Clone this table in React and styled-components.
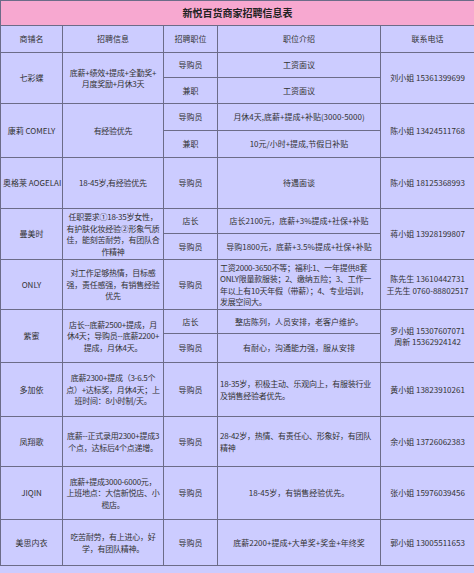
import React from 'react';
import styled, { createGlobalStyle } from 'styled-components';

const GlobalStyle = createGlobalStyle`
  html, body {
    margin: 0;
    padding: 0;
    background: #ccccff;
  }
`;

const Table = styled.table`
  width: 474px;
  border-collapse: collapse;
  table-layout: fixed;
  font-family: "Noto Sans CJK SC", "DejaVu Sans", sans-serif;
  font-size: 8px;
  line-height: 11.5px;
  color: #333;
  background: #ccccff;
  border: 1px solid #6c6c88;
`;

const TitleCell = styled.td`
  height: 24px;
  background: #f7a8d0;
  text-align: center;
  font-weight: bold;
  font-size: 10px;
  color: #222;
  border: 1px solid #6c6c88;
  padding: 0;
`;

const HeadCell = styled.td`
  height: 26px;
  text-align: center;
  border: 1px solid #6c6c88;
  padding: 0 2px;
`;

const Cell = styled.td`
  border: 1px solid #6c6c88;
  text-align: ${(p) => (p.$left ? 'left' : 'center')};
  vertical-align: middle;
  padding: 0 2px;
  white-space: nowrap;
  overflow: hidden;
  letter-spacing: ${(p) => (p.$tight ? '-0.25px' : 'normal')};
`;

const Row = styled.tr`
  height: ${(p) => p.$h}px;
`;

const lines = (arr) =>
  arr.map((t, i) => (
    <React.Fragment key={i}>
      {i > 0 && <br />}
      {t}
    </React.Fragment>
  ));

const data = [
  {
    name: '七彩蝶',
    info: ['底薪+绩效+提成+全勤奖+', '月度奖励+月休3天'],
    contact: ['刘小姐 15361399699'],
    jobs: [
      { pos: '导购员', desc: ['工资面议'], h: 25 },
      { pos: '兼职', desc: ['工资面议'], h: 26 },
    ],
  },
  {
    name: '康莉 COMELY',
    info: ['有经验优先'],
    contact: ['陈小姐 13424511768'],
    jobs: [
      { pos: '导购员', desc: ['月休4天,底薪+提成+补贴(3000-5000)'], h: 27 },
      { pos: '兼职', desc: ['10元/小时+提成,节假日补贴'], h: 27 },
    ],
  },
  {
    name: '奥格莱 AOGELAI',
    info: ['18-45岁,有经验优先'],
    contact: ['陈小姐 18125368993'],
    jobs: [{ pos: '导购员', desc: ['待遇面谈'], h: 51 }],
  },
  {
    name: '曼美时',
    info: ['任职要求①18-35岁女性，', '有护肤化妆经验②形象气质', '佳，能刻苦耐劳，有团队合', '作精神'],
    contact: ['蒋小姐 13928199807'],
    jobs: [
      { pos: '店长', desc: ['店长2100元，底薪+3%提成+社保+补贴'], h: 25 },
      { pos: '导购员', desc: ['导购1800元，底薪+3.5%提成+社保+补贴'], h: 26 },
    ],
  },
  {
    name: 'ONLY',
    info: ['对工作足够热情，目标感', '强，责任感强，有销售经验', '优先'],
    contact: ['陈先生 13610442731', '王先生 0760-88802517'],
    jobs: [
      {
        pos: '导购员',
        left: true,
        desc: [
          '工资2000-3650不等；福利:1、一年提供8套',
          'ONLY限量款服装；2、缴纳五险；3、工作一',
          '年以上有10天年假（带薪）；4、专业培训，',
          '发展空间大。',
        ],
        h: 50,
      },
    ],
  },
  {
    name: '紫蜜',
    info: ['店长--底薪2500+提成，月', '休4天；导购员--底薪2200+', '提成，月休4天。'],
    contact: ['罗小姐 15307607071', '周新 15362924142'],
    jobs: [
      { pos: '店长', desc: ['整店陈列，人员安排，老客户维护。'], h: 24 },
      { pos: '导购员', desc: ['有耐心，沟通能力强，服从安排'], h: 29 },
    ],
  },
  {
    name: '多加依',
    info: ['底薪2300+提成（3-6.5个', '点）+达标奖，月休4天；上', '班时间：8小时制/天。'],
    contact: ['黄小姐 13823910261'],
    jobs: [
      {
        pos: '导购员',
        left: true,
        desc: ['18-35岁，积极主动、乐观向上，有服装行业', '及销售经验者优先。'],
        h: 54,
      },
    ],
  },
  {
    name: '凤翔歌',
    info: ['底薪--正式录用2300+提成3', '个点，达标后4个点递增。'],
    contact: ['余小姐 13726062383'],
    jobs: [
      {
        pos: '导购员',
        left: true,
        desc: ['28-42岁，热情、有责任心、形象好，有团队', '精神'],
        h: 50,
      },
    ],
  },
  {
    name: 'JIQIN',
    info: ['底薪+提成3000-6000元，', '上班地点：大信新悦店、小', '榄店。'],
    contact: ['张小姐 15976039456'],
    jobs: [{ pos: '导购员', desc: ['18-45岁，有销售经验优先。'], h: 53 }],
  },
  {
    name: '美思内衣',
    info: ['吃苦耐劳，有上进心，好', '学，有团队精神。'],
    contact: ['郭小姐 13005511653'],
    jobs: [{ pos: '导购员', desc: ['底薪2200+提成+大单奖+奖金+年终奖'], h: 46 }],
  },
];

const App = () => {
  return (
    <>
      <GlobalStyle />
      <Table>
        <colgroup>
          <col style={{ width: 62 }} />
          <col style={{ width: 101 }} />
          <col style={{ width: 54 }} />
          <col style={{ width: 163 }} />
          <col style={{ width: 94 }} />
        </colgroup>
        <tbody>
          <tr>
            <TitleCell colSpan={5}>新悦百货商家招聘信息表</TitleCell>
          </tr>
          <tr>
            <HeadCell>商铺名</HeadCell>
            <HeadCell>招聘信息</HeadCell>
            <HeadCell>招聘职位</HeadCell>
            <HeadCell>职位介绍</HeadCell>
            <HeadCell>联系电话</HeadCell>
          </tr>
          {data.map((shop) =>
            shop.jobs.map((job, j) => (
              <Row key={shop.name + j} $h={job.h}>
                {j === 0 && (
                  <>
                    <Cell rowSpan={shop.jobs.length}>{shop.name}</Cell>
                    <Cell rowSpan={shop.jobs.length} $tight>
                      {lines(shop.info)}
                    </Cell>
                  </>
                )}
                <Cell>{job.pos}</Cell>
                <Cell $left={job.left} $tight={job.left}>
                  {lines(job.desc)}
                </Cell>
                {j === 0 && <Cell rowSpan={shop.jobs.length}>{lines(shop.contact)}</Cell>}
              </Row>
            ))
          )}
        </tbody>
      </Table>
    </>
  );
};

export default App;
